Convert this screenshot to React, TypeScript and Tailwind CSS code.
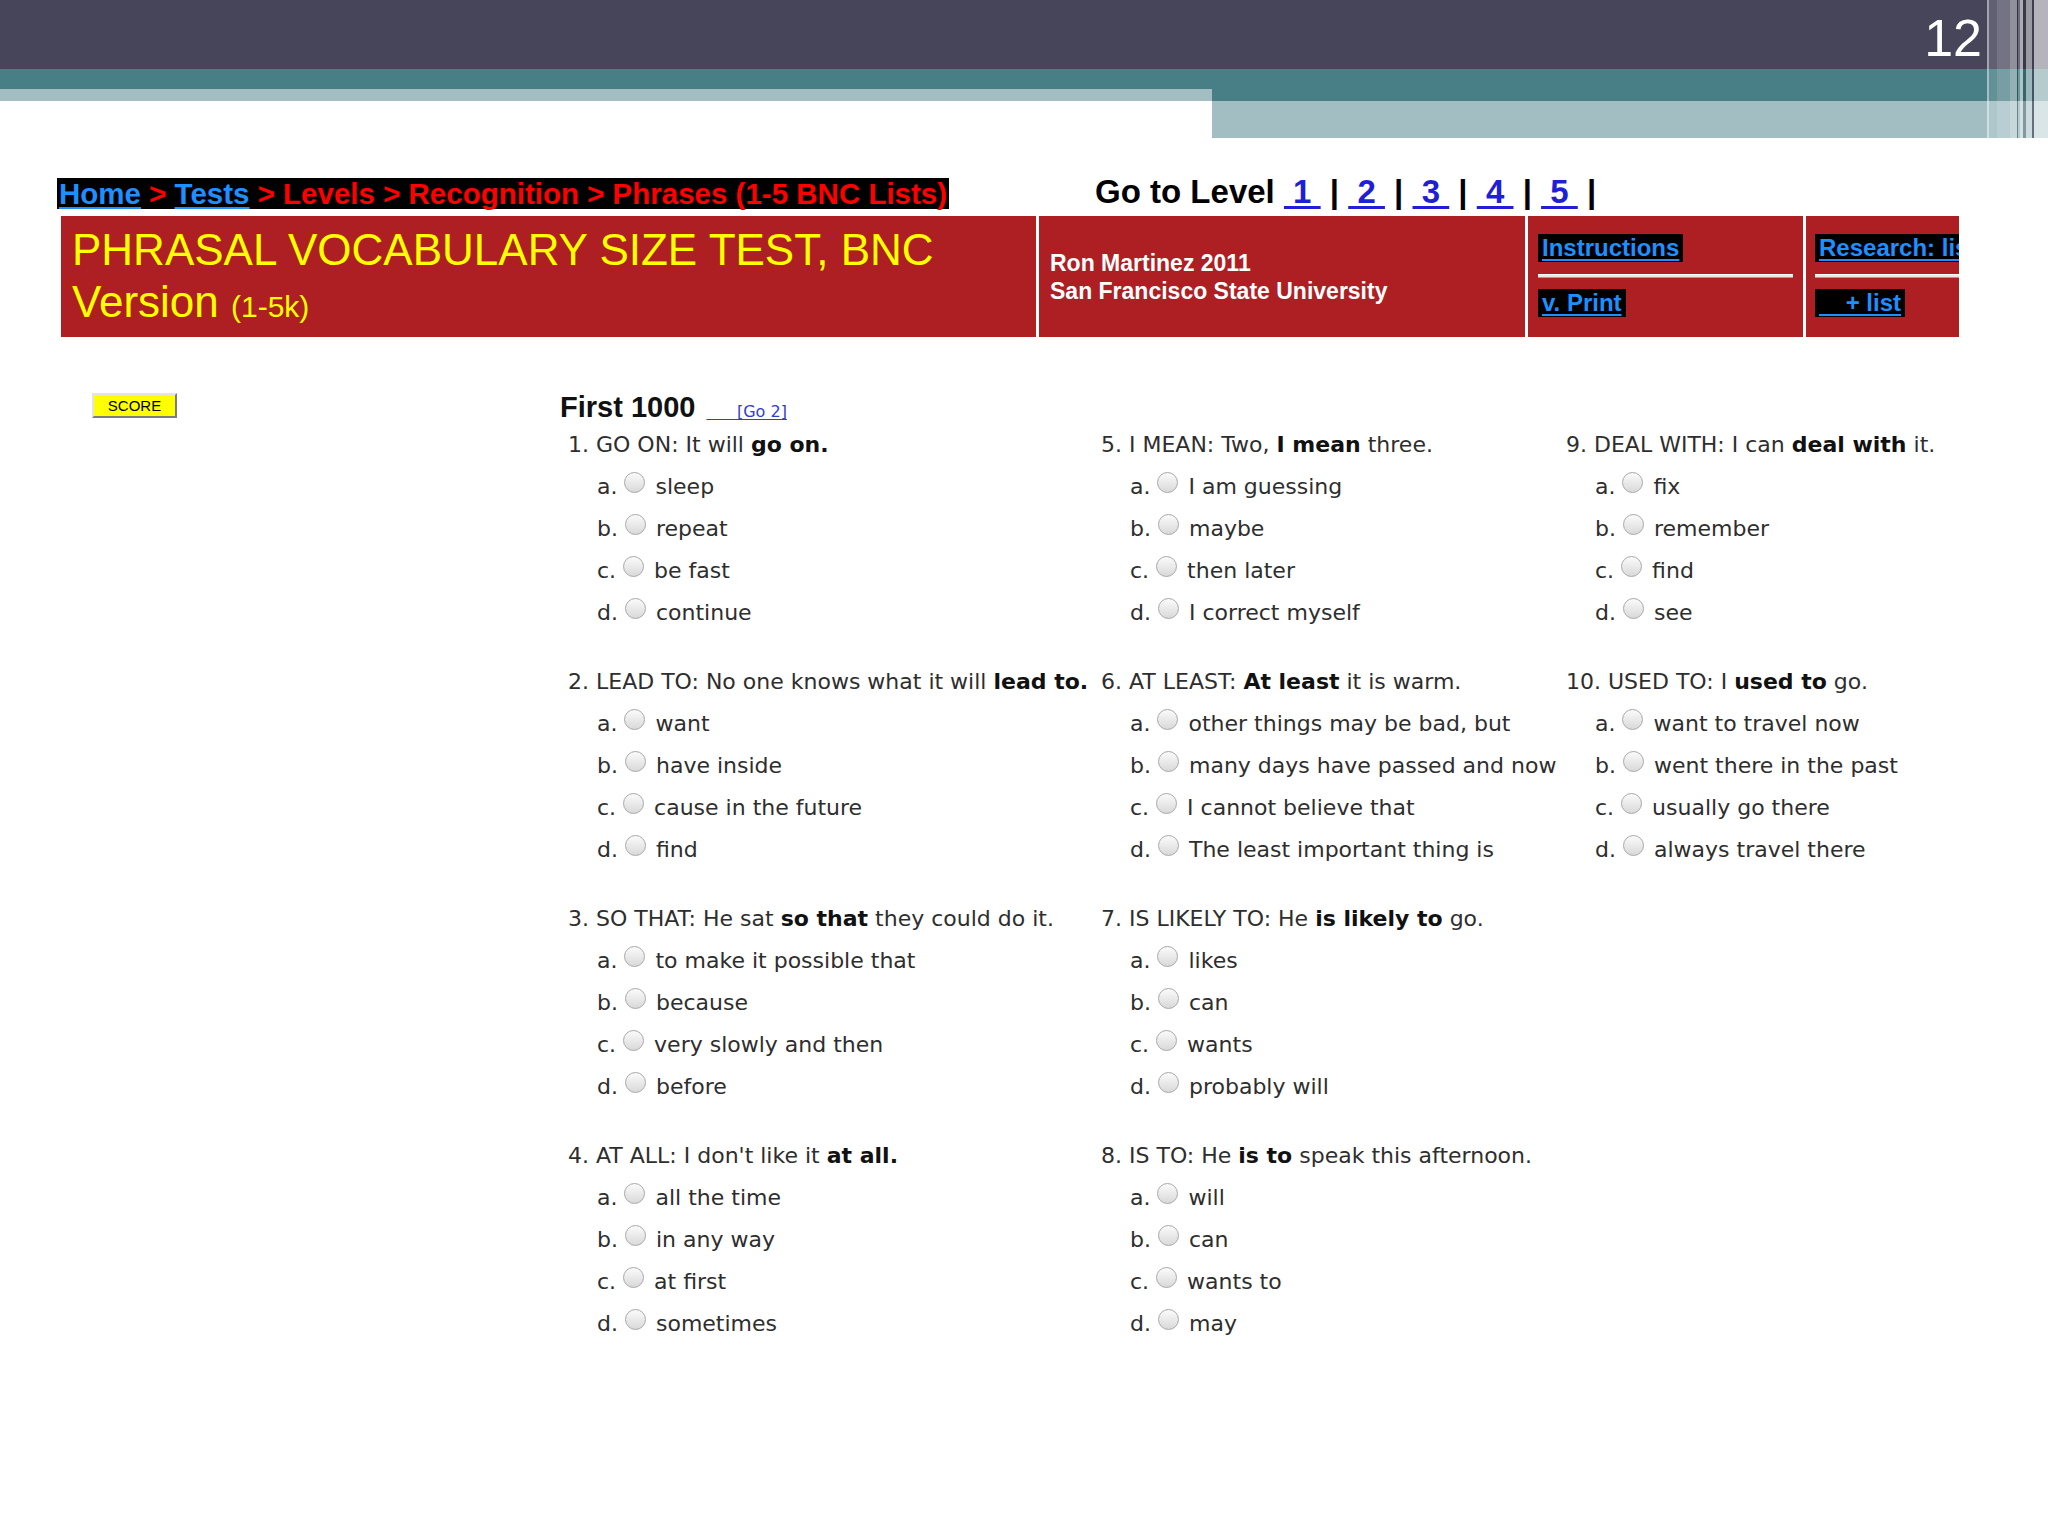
import React from "react";

type Question = { n: number; text: string; options: string[] };

const columns: Question[][] = [
  [
    { n: 1, text: "GO ON: It will **go on.**", options: ["sleep", "repeat", "be fast", "continue"] },
    { n: 2, text: "LEAD TO: No one knows what it will **lead to.**", options: ["want", "have inside", "cause in the future", "find"] },
    { n: 3, text: "SO THAT: He sat **so that** they could do it.", options: ["to make it possible that", "because", "very slowly and then", "before"] },
    { n: 4, text: "AT ALL: I don't like it **at all.**", options: ["all the time", "in any way", "at first", "sometimes"] },
  ],
  [
    { n: 5, text: "I MEAN: Two, **I mean** three.", options: ["I am guessing", "maybe", "then later", "I correct myself"] },
    {
      n: 6,
      text: "AT LEAST: **At least** it is warm.",
      options: ["other things may be bad, but", "many days have passed and now", "I cannot believe that", "The least important thing is"],
    },
    { n: 7, text: "IS LIKELY TO: He **is likely to** go.", options: ["likes", "can", "wants", "probably will"] },
    { n: 8, text: "IS TO: He **is to** speak this afternoon.", options: ["will", "can", "wants to", "may"] },
  ],
  [
    { n: 9, text: "DEAL WITH: I can **deal with** it.", options: ["fix", "remember", "find", "see"] },
    { n: 10, text: "USED TO: I **used to** go.", options: ["want to travel now", "went there in the past", "usually go there", "always travel there"] },
  ],
];

const letters = ["a.", "b.", "c.", "d."];

function Rich({ text }: { text: string }) {
  const parts = text.split("**");
  return (
    <>
      {parts.map((p, i) =>
        i % 2 === 1 ? (
          <b key={i} className="font-bold text-[#111]">
            {p}
          </b>
        ) : (
          <span key={i}>{p}</span>
        )
      )}
    </>
  );
}

function Radio() {
  return (
    <span className="mt-[6px] ml-[7px] mr-[10px] inline-block w-[21px] h-[21px] shrink-0 rounded-full border border-[#a8a8a8] bg-linear-to-b from-[#fbfbfb] to-[#d9d9d9]" />
  );
}

function QuestionBlock({ q }: { q: Question }) {
  return (
    <div className="mb-[27px]">
      <div className="h-[42px] leading-[42px] whitespace-nowrap">
        {q.n}. <Rich text={q.text} />
      </div>
      {q.options.map((o, i) => (
        <div key={o} className="flex items-start h-[42px] leading-[42px] pl-[29px] whitespace-nowrap">
          <span>{letters[i]}</span>
          <Radio />
          <span>{o}</span>
        </div>
      ))}
    </div>
  );
}

function BlackLink({ children }: { children: React.ReactNode }) {
  return (
    <div className="flex w-fit bg-black px-[4px] h-[28px] leading-[28px] text-[24px] font-bold text-[#1e8fff] underline underline-offset-[3px] whitespace-nowrap">
      {children}
    </div>
  );
}

function Rule() {
  return <div className="h-[4px] bg-[#f1e6e6] border-b border-[#c48b8b] border-t border-t-[#fff]" />;
}

export default function App() {
  return (
    <div className="w-[2048px] h-[1536px] bg-white overflow-hidden font-['DejaVu_Sans',Verdana,sans-serif] text-[22px] text-[#2e2e2e]">
      {/* slide header band */}
      <div className="relative h-[138px]">
        <div className="h-[69px] bg-[#46455a] flex justify-end items-start pt-[8px] pr-[66px]">
          <span className="font-['Liberation_Sans',Arial,sans-serif] text-[52px] leading-[60px] text-white">12</span>
        </div>
        <div className="flex">
          <div className="w-[1212px]">
            <div className="h-[20px] bg-[#487e85]" />
            <div className="h-[12px] bg-[#a2bec3]" />
          </div>
          <div className="flex-1">
            <div className="h-[32px] bg-[#487e85]" />
            <div className="h-[37px] bg-[#a2bec3]" />
          </div>
        </div>
        <div className="absolute right-0 top-0 h-[138px] w-[61px] flex">
          <div className="w-[2px] bg-white/50" />
          <div className="w-[8px] bg-white/15" />
          <div className="w-[13px] bg-white/25" />
          <div className="w-[7px] bg-white/40" />
          <div className="w-[1px] bg-black/30" />
          <div className="w-[2px] bg-white/20" />
          <div className="w-[3px] bg-white/55" />
          <div className="w-[3px] bg-black/20" />
          <div className="w-[6px] bg-white/45" />
          <div className="w-[2px] bg-[#3a3a4a]/60" />
          <div className="w-[14px] bg-white/60" />
        </div>
      </div>

      {/* breadcrumb + level nav */}
      <div className="flex items-start mt-[35px] h-[38px] font-['Liberation_Sans',Arial,sans-serif] font-bold">
        <div className="mt-[5px] ml-[57px] bg-black px-[2px] h-[31px] leading-[31px] text-[29.5px] text-[#ff0000] whitespace-nowrap">
          <span className="text-[#1e8fff] underline underline-offset-[3px]">Home</span> &gt;{" "}
          <span className="text-[#1e8fff] underline underline-offset-[3px]">Tests</span> &gt; Levels &gt; Recognition &gt; Phrases (1-5 BNC Lists)
        </div>
        <div className="ml-[146px] text-[33px] leading-[38px] text-black whitespace-nowrap">
          Go to Level{" "}
          {[1, 2, 3, 4, 5].map((n) => (
            <span key={n}>
              <span className="text-[#1f1fd6] underline underline-offset-[3px]">{"\u00a0" + n + "\u00a0"}</span> |{" "}
            </span>
          ))}
        </div>
      </div>

      {/* red title table */}
      <div className="mt-[5px] ml-[61px] w-[1898px] h-[121px] flex gap-[3px] font-['Liberation_Sans',Arial,sans-serif]">
        <div className="w-[975px] bg-[#ae1f24] pl-[11px] pt-[8px] text-[#ffff00] text-[44px] leading-[52px]">
          <div>PHRASAL VOCABULARY SIZE TEST, BNC</div>
          <div>
            Version <span className="text-[30px]">(1-5k)</span>
          </div>
        </div>
        <div className="w-[486px] bg-[#ae1f24] pl-[11px] flex flex-col justify-center text-white font-bold text-[23px] leading-[28px]">
          <div>Ron Martinez 2011</div>
          <div>San Francisco State University</div>
        </div>
        <div className="w-[275px] bg-[#ae1f24] pt-[18px] px-[10px]">
          <BlackLink>Instructions</BlackLink>
          <div className="mt-[12px]">
            <Rule />
          </div>
          <div className="mt-[11px]">
            <BlackLink>v. Print</BlackLink>
          </div>
        </div>
        <div className="w-[153px] bg-[#ae1f24] pt-[18px] pl-[9px] overflow-hidden">
          <BlackLink>Research: list</BlackLink>
          <div className="mt-[12px] w-[200px]">
            <Rule />
          </div>
          <div className="mt-[11px]">
            <BlackLink>{"\u00a0\u00a0\u00a0\u00a0+ list"}</BlackLink>
          </div>
        </div>
      </div>

      {/* test body */}
      <div className="flex items-start mt-[54px]">
        <div className="w-[560px] pl-[92px] pt-[2px]">
          <button className="block w-[85px] h-[25px] bg-[#ffff00] border-2 border-t-[#e4e4e4] border-l-[#e4e4e4] border-b-[#7d7d7d] border-r-[#7d7d7d] font-['Liberation_Sans',Arial,sans-serif] text-[15px] leading-[19px] text-black">
            SCORE
          </button>
        </div>
        <div>
          <div className="h-[33px] leading-[33px] whitespace-nowrap">
            <span className="font-['Liberation_Sans',Arial,sans-serif] font-bold text-[29px] text-[#111]">First 1000</span>{" "}
            <span className="ml-[4px] text-[16px] text-[#3140c8] underline underline-offset-[2px]">
              {"\u00a0\u00a0\u00a0\u00a0\u00a0\u00a0[Go 2]"}
            </span>
          </div>
          <div className="ml-[8px] grid grid-cols-[533px_465px_auto]">
            {columns.map((col, ci) => (
              <div key={ci}>
                {col.map((q) => (
                  <QuestionBlock key={q.n} q={q} />
                ))}
              </div>
            ))}
          </div>
        </div>
      </div>
    </div>
  );
}
